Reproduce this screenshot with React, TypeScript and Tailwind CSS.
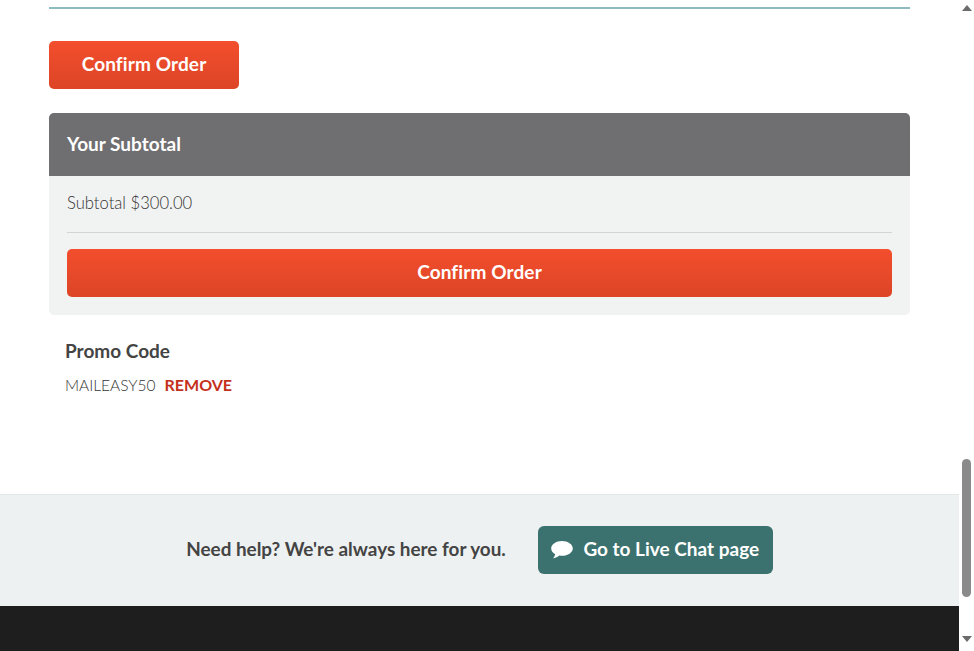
const ConfirmButton = ({ className }: { className: string }) => (
  <button className={`h-12 rounded-[5px] bg-gradient-to-b from-[#f34e2d] to-[#dc4526] pb-px text-[19px] font-bold tracking-[0.12px] text-white ${className}`}>
    Confirm Order
  </button>
);

export default function App() {
  return (
    <div className="flex h-[651px] w-[974px] overflow-hidden bg-white font-['Lato',sans-serif] text-[#444]">
      <main className="flex w-[959px] flex-col">
        <div className="flex-1 pl-[49px] pr-[49px] pt-[7px]">
          <div className="h-0.5 bg-[#8fbcc0]" />
          <ConfirmButton className="mt-8 block w-[190px]" />

          <section className="mt-6 rounded-[5px] bg-[#f1f2f2]">
            <h2 className="flex h-[63px] items-center rounded-t-[5px] bg-[#6f6e70] px-[18px] text-[19px] font-bold text-white">
              Your Subtotal
            </h2>
            <div className="px-[18px] pb-[18px]">
              <p className="flex h-[57px] items-center border-b border-[#d4d4d4] pb-px text-[16.6px] font-light text-[#333]">Subtotal $300.00</p>
              <ConfirmButton className="mt-4 block w-full" />
            </div>
          </section>

          <div className="pl-4 pt-[25px]">
            <h3 className="text-[19px] font-bold leading-[22px] text-[#444]">Promo Code</h3>
            <p className="mt-[12px] flex items-center gap-[9px] text-[15.5px] font-light leading-[22px] text-[#333]">
              MAILEASY50
              <span className="text-[16px] font-bold text-[#c4301c]">REMOVE</span>
            </p>
          </div>
        </div>

        <div className="flex h-[112px] items-center justify-center gap-8 border-t border-[#e2e6e6] bg-[#eef1f1] pb-[2px]">
          <span className="text-[18.9px] font-bold text-[#444]">Need help? We're always here for you.</span>
          <button className="flex h-12 w-[235px] items-center justify-center gap-2.5 rounded-[6px] bg-[#3b716e] text-[19px] font-bold text-white">
            <svg viewBox="0 0 24 20" className="h-[18px] w-[22px] fill-white">
              <path d="M12 0C5.4 0 0 3.6 0 8.2c0 2.6 1.7 4.9 4.4 6.400-.3 1.600-1.200 3.300-2.400 4.600 2.700-.2 5.300-1.300 7.100-3 .9.200 1.900.200 2.900.200 6.600 0 12-3.700 12-8.200S18.600 0 12 0Z" />
            </svg>
            Go to Live Chat page
          </button>
        </div>
        <div className="h-[45px] bg-[#1e1e1e]" />
      </main>

      <div className="flex w-[15px] flex-col items-center bg-white">
        <svg viewBox="0 0 10 6" className="mt-[5px] h-[6px] w-[10px] fill-[#6b6b6b]">
          <path d="M5 0l5 6H0z" />
        </svg>
        <div className="mt-[448px] h-[138px] w-[9px] rounded-full bg-[#8a8a8a]" />
        <svg viewBox="0 0 10 6" className="mt-[39px] h-[6px] w-[10px] fill-[#6b6b6b]">
          <path d="M0 0h10L5 6z" />
        </svg>
      </div>
    </div>
  );
}
